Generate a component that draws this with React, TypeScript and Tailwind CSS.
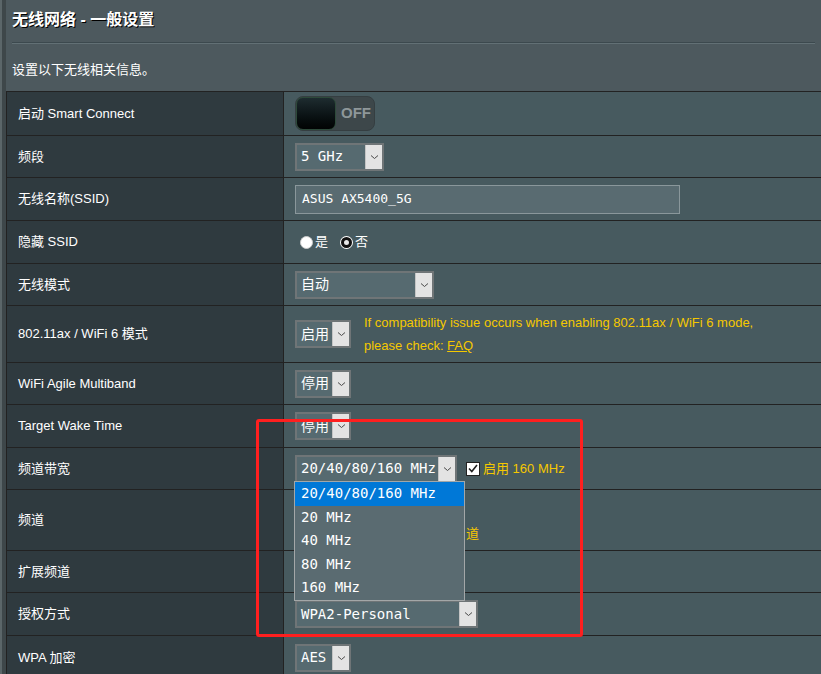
import clsx from 'clsx'
import type { ReactNode } from 'react'

const mono = "font-['DejaVu_Sans_Mono','Noto_Sans_CJK_SC',monospace]"

function Chevron() {
  return (
    <svg width="9" height="6" viewBox="0 0 9 6" fill="none">
      <path d="M1 1.5 L4.5 4.5 L8 1.5" stroke="#4a4a4a" strokeWidth="1" />
    </svg>
  )
}

function Select({ value, w }: { value: string; w: string }) {
  return (
    <div className={clsx('flex h-[28px] border-2 border-[#6f7577] bg-[#566a70]', w)}>
      <span className={clsx('flex flex-1 items-center pl-[4px] text-[14px] text-white', mono)}>{value}</span>
      <span className="flex w-[17px] items-center justify-center border-l border-[#c4c4c4] bg-[#e3e3e3]">
        <Chevron />
      </span>
    </div>
  )
}

function Toggle() {
  return (
    <div className="flex h-[35px] w-[80px] items-center rounded-[8px] border border-[#353e41] bg-[#3d474a]">
      <div className="h-[33px] w-[40px] rounded-[7px] border border-[#2d4a3a] bg-gradient-to-b from-[#1e2c30] to-[#020404]" />
      <span className="ml-[5px] text-[15px] font-bold text-[#8e9799]">OFF</span>
    </div>
  )
}

function Radio({ checked, label }: { checked?: boolean; label: string }) {
  return (
    <span className="flex items-center gap-[2px]">
      {checked ? (
        <span className="flex h-[13px] w-[13px] items-center justify-center rounded-full bg-white">
          <span className="h-[11px] w-[11px] rounded-full border-[3px] border-[#111] bg-[#e8e8e8]" />
        </span>
      ) : (
        <span className="h-[13px] w-[13px] rounded-full border border-[#ccc] bg-white" />
      )}
      <span className="text-[13px] text-white">{label}</span>
    </span>
  )
}

type Row = { label: string; h: string; content?: ReactNode }

// the 频道 / 扩展频道 selects sit under the open dropdown, so they carry no text
const rows: Row[] = [
  { label: '启动 Smart Connect', h: 'h-[44px]', content: <Toggle /> },
  { label: '频段', h: 'h-[42px]', content: <Select value="5 GHz" w="w-[89px]" /> },
  {
    label: '无线名称(SSID)',
    h: 'h-[43px]',
    content: (
      <div className={clsx('flex h-[29px] w-[385px] items-center border border-[#8a979b] bg-[#596b71] pl-[6px] text-[13px] text-white', mono)}>
        ASUS AX5400_5G
      </div>
    ),
  },
  {
    label: '隐藏 SSID',
    h: 'h-[43px]',
    content: (
      <div className="flex items-center gap-[12px] pl-[5px]">
        <Radio label="是" />
        <Radio checked label="否" />
      </div>
    ),
  },
  { label: '无线模式', h: 'h-[42px]', content: <Select value="自动" w="w-[139px]" /> },
  {
    label: '802.11ax / WiFi 6 模式',
    h: 'h-[57px]',
    content: (
      <div className="flex items-center gap-[13px]">
        <Select value="启用" w="w-[56px]" />
        <p className="text-[13px] leading-[23px] text-[#f5c800]">
          If compatibility issue occurs when enabling 802.11ax / WiFi 6 mode,
          <br />
          please check: <span className="underline">FAQ</span>
        </p>
      </div>
    ),
  },
  { label: 'WiFi Agile Multiband', h: 'h-[42px]', content: <Select value="停用" w="w-[56px]" /> },
  { label: 'Target Wake Time', h: 'h-[43px]', content: <Select value="停用" w="w-[56px]" /> },
  {
    label: '频道带宽',
    h: 'h-[42px]',
    content: (
      <div className="flex items-center">
        <Select value="20/40/80/160 MHz" w="w-[162px]" />
        <span className="ml-[9px] flex h-[14px] w-[14px] items-center justify-center border border-[#222] bg-white">
          <svg width="10" height="9" viewBox="0 0 10 9" fill="none">
            <path d="M1 4.5 L3.8 7.5 L9 1" stroke="#222" strokeWidth="1.6" />
          </svg>
        </span>
        <span className="ml-[3px] text-[13px] text-[#f5c800]">启用 160 MHz</span>
      </div>
    ),
  },
  {
    label: '频道',
    h: 'h-[61px]',
    content: (
      <div className="flex flex-col">
        <Select value="" w="w-[90px]" />
        <span className="w-[184px] text-right text-[13px] leading-[20px] text-[#f5c800]">道</span>
      </div>
    ),
  },
  { label: '扩展频道', h: 'h-[42px]', content: <Select value="" w="w-[90px]" /> },
  { label: '授权方式', h: 'h-[43px]', content: <Select value="WPA2-Personal" w="w-[183px]" /> },
  { label: 'WPA 加密', h: 'h-[44px]', content: <Select value="AES" w="w-[56px]" /> },
]

const options = ['20/40/80/160 MHz', '20 MHz', '40 MHz', '80 MHz', '160 MHz']

export default function App() {
  return (
    <div className="relative flex h-[674px] w-[821px] overflow-hidden bg-[#4d595e] font-['Liberation_Sans','Noto_Sans_CJK_SC',sans-serif]">
      <div className="w-[2px] bg-[#5b6669]" />
      <div className="w-[4px] bg-[#3e474a]" />

      <div className="flex flex-1 flex-col">
        <header className="px-[6px] pt-[10px]">
          <h1 className="text-[16px] font-bold leading-[20px] text-white [text-shadow:1px_1px_0_#000]">无线网络 - 一般设置</h1>
          <div className="mt-[12px] h-[2px] border-t border-b border-t-[#3c494e] border-b-[#627075]" />
          <p className="mt-[16px] text-[13px] leading-[20px] text-white">设置以下无线相关信息。</p>
        </header>

        <div className="mt-[11px] border-t border-l border-[#222]">
          {rows.map((r) => (
            <div key={r.label} className={clsx('flex border-b border-[#222]', r.h)}>
              <div className="flex w-[277px] shrink-0 items-center border-r border-[#222] bg-[#2f3a3f] pl-[11px] text-[13px] text-white">
                {r.label}
              </div>
              <div className="flex flex-1 items-center bg-[#475a5f] pl-[11px]">{r.content}</div>
            </div>
          ))}
        </div>
      </div>

      {/* open bandwidth dropdown */}
      <ul className={clsx('absolute left-[294px] top-[481px] w-[171px] border border-[#a3a7a8] bg-[#5a6b71] text-[14px] text-white', mono)}>
        {options.map((o, i) => (
          <li key={o} className={clsx('flex h-[23.5px] items-center pl-[6px]', i === 0 && 'bg-[#0078d7]')}>
            {o}
          </li>
        ))}
      </ul>

      {/* annotation */}
      <div className="pointer-events-none absolute left-[256px] top-[419px] h-[218px] w-[327px] rounded-[3px] border-[3px] border-[#ff1f1f]" />
    </div>
  )
}
